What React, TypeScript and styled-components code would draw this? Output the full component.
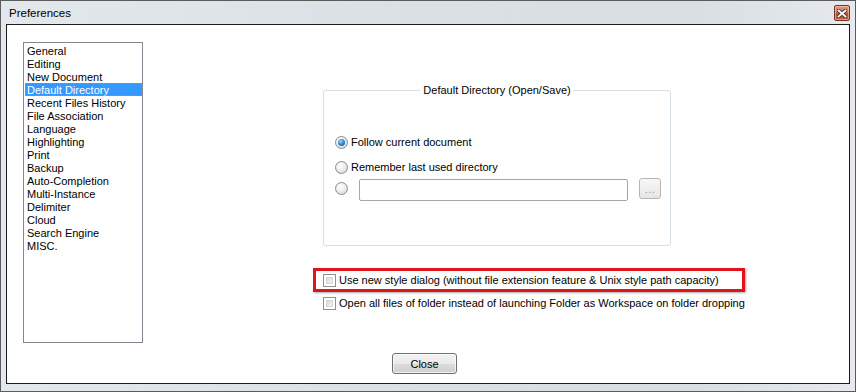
import React from 'react';
import styled, { createGlobalStyle } from 'styled-components';

const GlobalStyle = createGlobalStyle`
  html, body {
    margin: 0;
    padding: 0;
    background: #ffffff;
    overflow: hidden;
  }
  body {
    font-family: "Liberation Sans", Arial, sans-serif;
    font-size: 11px;
    color: #000;
  }
`;

const pages = [
  'General',
  'Editing',
  'New Document',
  'Default Directory',
  'Recent Files History',
  'File Association',
  'Language',
  'Highlighting',
  'Print',
  'Backup',
  'Auto-Completion',
  'Multi-Instance',
  'Delimiter',
  'Cloud',
  'Search Engine',
  'MISC.',
];

const Window = styled.div`
  width: 856px;
  height: 392px;
  box-sizing: border-box;
  border: 1px solid #5b5b5b;
  background: linear-gradient(90deg, #e3e8ec 0%, #dae0e5 50%, #d8dee3 80%, #e6eaee 100%);
  padding: 0 5px 7px 5px;
  display: flex;
  flex-direction: column;
`;

const TitleBar = styled.div`
  height: 23px;
  display: flex;
  align-items: center;
  justify-content: space-between;
  padding: 0 0 0 3px;
`;

const Title = styled.span`
  font-size: 11.5px;
  color: #000;
`;

const CloseX = styled.button`
  width: 16px;
  height: 16px;
  margin-top: 1px;
  padding: 0;
  box-sizing: border-box;
  border: 1px solid #6e3528;
  border-radius: 2px;
  background: linear-gradient(180deg, #e2977f 0%, #d6745a 45%, #c2482a 55%, #c75a3c 100%);
  display: flex;
  align-items: center;
  justify-content: center;
  box-shadow: inset 0 0 0 1px rgba(255, 220, 200, 0.5);
`;

const Client = styled.div`
  flex: 1;
  border: 1px solid #1c1c1c;
  background: #ffffff;
  display: flex;
  flex-direction: column;
`;

const Body = styled.div`
  display: flex;
  padding: 17px 0 0 16px;
`;

const ListBox = styled.ul`
  width: 120px;
  height: 301px;
  box-sizing: border-box;
  margin: 0;
  padding: 1px 0 0 0;
  list-style: none;
  border: 1px solid #828790;
  flex-shrink: 0;
`;

const ListItem = styled.li<{ $selected?: boolean }>`
  height: 13px;
  line-height: 15px;
  margin: 0 0 0 1px;
  padding-left: 2px;
  white-space: nowrap;
  box-sizing: border-box;
  background: ${(p) => (p.$selected ? '#3399ff' : 'transparent')};
  color: ${(p) => (p.$selected ? '#ffffff' : '#000000')};
  outline: ${(p) => (p.$selected ? '1px dotted #c88a3a' : 'none')};
  outline-offset: -1px;
`;

const RightPane = styled.div`
  flex: 1;
  display: flex;
  flex-direction: column;
  align-items: flex-start;
  padding: 48px 0 0 180px;
`;

const GroupBox = styled.div`
  position: relative;
  width: 348px;
  height: 156px;
  box-sizing: border-box;
  border: 1px solid #d5dfe5;
  border-radius: 3px;
  padding: 43px 0 0 11px;
  display: flex;
  flex-direction: column;
`;

const Legend = styled.span`
  position: absolute;
  top: -7px;
  left: 50%;
  transform: translateX(-50%);
  background: #fff;
  padding: 0 3px;
  white-space: nowrap;
  line-height: 13px;
`;

const RadioRow = styled.label<{ $gap?: number }>`
  display: flex;
  align-items: center;
  height: 16px;
  margin-bottom: ${(p) => p.$gap ?? 0}px;
  gap: 3px;
  white-space: nowrap;
`;

const Radio = styled.span<{ $checked?: boolean }>`
  width: 13px;
  height: 13px;
  box-sizing: border-box;
  border-radius: 50%;
  border: 1px solid #8a8b8c;
  background: radial-gradient(circle at 40% 35%, #ffffff 0%, #f0f0f0 40%, #cfd0d1 100%);
  display: flex;
  align-items: center;
  justify-content: center;
  flex-shrink: 0;
  &::after {
    content: '';
    display: ${(p) => (p.$checked ? 'block' : 'none')};
    width: 7px;
    height: 7px;
    border-radius: 50%;
    background: radial-gradient(circle at 40% 35%, #a9daf7 0%, #2f8ed8 45%, #124d86 100%);
  }
`;

const PathRow = styled.div`
  display: flex;
  align-items: flex-start;
  margin-top: 3px;
  height: 23px;
`;

const PathRadio = styled.div`
  height: 23px;
  display: flex;
  align-items: center;
  margin-top: -1px;
`;

const PathInput = styled.div`
  width: 269px;
  height: 22px;
  box-sizing: border-box;
  margin: 1px 0 0 11px;
  border: 1px solid #a6a6a6;
  border-radius: 2px;
  background: #fff;
`;

const BrowseButton = styled.button`
  width: 22px;
  height: 21px;
  margin-left: 11px;
  padding: 0 0 4px 0;
  box-sizing: border-box;
  border: 1px solid #b5b5b5;
  border-radius: 3px;
  background: linear-gradient(180deg, #f7f7f7 0%, #efefef 50%, #e5e5e5 100%);
  font-family: "Liberation Sans", Arial, sans-serif;
  font-size: 11px;
  color: #8a9bb0;
  letter-spacing: 0.5px;
  display: flex;
  align-items: flex-end;
  justify-content: center;
  line-height: 10px;
`;

const Highlight = styled.div`
  margin: 22px 0 0 -10px;
  width: 432px;
  height: 24px;
  box-sizing: border-box;
  border: 3px solid #e2141b;
  padding-left: 7px;
  display: flex;
  align-items: center;
  box-shadow: 1px 1px 2px rgba(0, 0, 0, 0.35);
`;

const CheckRow = styled.label<{ $top?: number }>`
  display: flex;
  align-items: center;
  height: 16px;
  gap: 2px;
  margin-top: ${(p) => p.$top ?? 0}px;
  white-space: nowrap;
`;

const Check = styled.span`
  width: 13px;
  height: 13px;
  box-sizing: border-box;
  border: 1px solid #8e8f8f;
  background: #fff;
  padding: 2px;
  flex-shrink: 0;
  margin-right: 1px;
  &::after {
    content: '';
    display: block;
    width: 100%;
    height: 100%;
    box-sizing: border-box;
    border: 1px solid #d5d5d5;
    background: linear-gradient(135deg, #d8d8d8 0%, #f4f4f4 100%);
  }
`;

const Footer = styled.div`
  display: flex;
  padding: 10px 0 0 385px;
`;

const PushButton = styled.button`
  width: 65px;
  height: 21px;
  box-sizing: border-box;
  border: 1px solid #707070;
  border-radius: 3px;
  background: linear-gradient(180deg, #f2f2f2 0%, #ebebeb 50%, #dddddd 51%, #cfcfcf 100%);
  box-shadow: inset 0 0 0 1px rgba(255, 255, 255, 0.7);
  font-family: "Liberation Sans", Arial, sans-serif;
  font-size: 11px;
  color: #000;
  padding: 0;
`;

function CloseIcon() {
  return (
    <svg width="10" height="9" viewBox="0 0 10 9">
      <path d="M1 1 L9 8 M9 1 L1 8" stroke="#3a3a3a" strokeWidth="3.6" strokeLinecap="square" />
      <path d="M1.5 1.5 L8.5 7.5 M8.5 1.5 L1.5 7.5" stroke="#ffffff" strokeWidth="1.8" strokeLinecap="square" />
    </svg>
  );
}

export default function App() {
  return (
    <>
      <GlobalStyle />
      <Window>
        <TitleBar>
          <Title>Preferences</Title>
          <CloseX aria-label="Close">
            <CloseIcon />
          </CloseX>
        </TitleBar>
        <Client>
          <Body>
            <ListBox>
              {pages.map((name) => (
                <ListItem key={name} $selected={name === 'Default Directory'}>
                  {name}
                </ListItem>
              ))}
            </ListBox>
            <RightPane>
              <GroupBox>
                <Legend>Default Directory (Open/Save)</Legend>
                <RadioRow $gap={9}>
                  <Radio $checked />
                  Follow current document
                </RadioRow>
                <RadioRow>
                  <Radio />
                  Remember last used directory
                </RadioRow>
                <PathRow>
                  <PathRadio>
                    <Radio />
                  </PathRadio>
                  <PathInput />
                  <BrowseButton>...</BrowseButton>
                </PathRow>
              </GroupBox>
              <Highlight>
                <CheckRow>
                  <Check />
                  Use new style dialog (without file extension feature &amp; Unix style path capacity)
                </CheckRow>
              </Highlight>
              <CheckRow $top={3}>
                <Check />
                Open all files of folder instead of launching Folder as Workspace on folder dropping
              </CheckRow>
            </RightPane>
          </Body>
          <Footer>
            <PushButton>Close</PushButton>
          </Footer>
        </Client>
      </Window>
    </>
  );
}
